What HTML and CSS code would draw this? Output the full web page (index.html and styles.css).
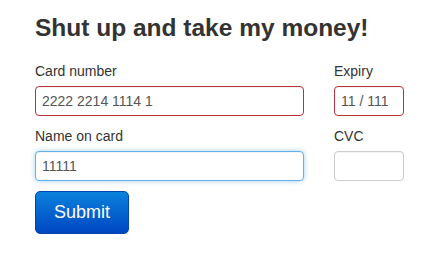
FILE: index.html
```html
<!DOCTYPE html>
<html lang="en">
<head>
    <meta charset="UTF-8">
    <title>Checkout</title>
    <link rel="stylesheet" href="styles.css">
</head>
<body>
    <div class="checkout">
        <h1>Shut up and take my money!</h1>
        <form class="card-form">
            <div class="field">
                <label for="card-number">Card number</label>
                <input type="text" id="card-number" class="invalid" value="2222 2214 1114 1">
            </div>
            <div class="field">
                <label for="expiry">Expiry</label>
                <input type="text" id="expiry" class="invalid" value="11 / 111">
            </div>
            <div class="field">
                <label for="name">Name on card</label>
                <input type="text" id="name" value="11111">
            </div>
            <div class="field">
                <label for="cvc">CVC</label>
                <input type="text" id="cvc">
            </div>
            <div class="actions">
                <button type="submit">Submit</button>
            </div>
        </form>
    </div>
    <script>
        var nameInput = document.getElementById('name');
        nameInput.focus();
        nameInput.setSelectionRange(5, 5);
    </script>
</body>
</html>
```

FILE: styles.css
```css
* {
    margin: 0;
    padding: 0;
    box-sizing: border-box;
}

body {
    font-family: 'Liberation Sans', Arial, sans-serif;
    color: #333;
    background: #fff;
}

.checkout {
    padding: 15px 35px;
}

.checkout h1 {
    font-size: 24.5px;
    line-height: 26px;
    font-weight: bold;
    color: #333;
    margin-bottom: 20px;
}

/* Form grid */
.card-form {
    display: grid;
    grid-template-columns: 269px 70px;
    column-gap: 30px;
    row-gap: 10px;
}

.field {
    display: flex;
    flex-direction: column;
    gap: 5px;
}

.field label {
    font-size: 14px;
    line-height: 20px;
    color: #333;
}

.field input {
    height: 30px;
    padding: 0 6px;
    font-family: inherit;
    font-size: 14px;
    color: #555;
    border: 1px solid #ccc;
    border-radius: 4px;
    outline: none;
    box-shadow: inset 0 1px 1px rgba(0, 0, 0, 0.05);
}

.field input.invalid {
    border-color: #b8323a;
}

.field input:focus {
    border-color: #66afe9;
    box-shadow: inset 0 1px 1px rgba(0, 0, 0, 0.05), 0 0 5px rgba(102, 175, 233, 0.6);
}

.actions {
    grid-column: 1 / -1;
}

.actions button {
    width: 94px;
    height: 43px;
    font-family: inherit;
    font-size: 18px;
    color: #fff;
    background: linear-gradient(to bottom, #0a82dc, #0046c2);
    border: 1px solid #0044b0;
    border-radius: 5px;
    cursor: pointer;
}
```
